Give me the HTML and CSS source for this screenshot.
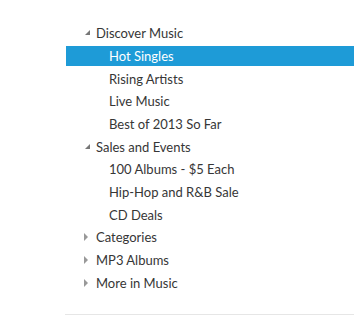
FILE: index.html
```html
<!DOCTYPE html>
<html>
<head>
<meta charset="utf-8">
<link rel="stylesheet" href="styles.css">
</head>
<body>
<div class="tree">
  <div class="row parent"><span class="tw"><svg width="6" height="6" viewBox="0 0 6 6"><polygon points="5,0 5,5 0,5" fill="#777"/></svg></span><span class="label">Discover Music</span></div>
  <div class="row child selected"><span class="label">Hot Singles</span></div>
  <div class="row child"><span class="label">Rising Artists</span></div>
  <div class="row child"><span class="label">Live Music</span></div>
  <div class="row child"><span class="label">Best of 2013 So Far</span></div>
  <div class="row parent"><span class="tw"><svg width="6" height="6" viewBox="0 0 6 6"><polygon points="5,0 5,5 0,5" fill="#777"/></svg></span><span class="label">Sales and Events</span></div>
  <div class="row child"><span class="label">100 Albums - $5 Each</span></div>
  <div class="row child"><span class="label">Hip-Hop and R&amp;B Sale</span></div>
  <div class="row child"><span class="label">CD Deals</span></div>
  <div class="row parent"><span class="tw closed"><svg width="5" height="8" viewBox="0 0 5 8"><polygon points="0,0 4,4 0,8" fill="#999"/></svg></span><span class="label">Categories</span></div>
  <div class="row parent"><span class="tw closed"><svg width="5" height="8" viewBox="0 0 5 8"><polygon points="0,0 4,4 0,8" fill="#999"/></svg></span><span class="label">MP3 Albums</span></div>
  <div class="row parent"><span class="tw closed"><svg width="5" height="8" viewBox="0 0 5 8"><polygon points="0,0 4,4 0,8" fill="#999"/></svg></span><span class="label">More in Music</span></div>
</div>
<div class="rule"></div>
</body>
</html>
```
FILE: styles.css
```css
html, body {
  margin: 0;
  padding: 0;
  background: #ffffff;
}
body {
  font-family: Lato, "Open Sans", sans-serif;
  font-size: 13px;
  color: #363636;
  width: 354px;
  height: 317px;
  overflow: hidden;
}
.tree {
  padding-top: 23.33px;
  margin-left: 66px;
  display: flex;
  flex-direction: column;
  gap: 2.67px;
}
.row {
  height: 20px;
  line-height: 20px;
  display: flex;
  align-items: center;
  white-space: nowrap;
}
.parent {
  padding-left: 16px;
}
.child {
  padding-left: 43px;
}
.tw {
  width: 14px;
  display: flex;
  align-items: center;
  padding-left: 3px;
  box-sizing: border-box;
}
.tw.closed {
  padding-left: 2px;
}
.selected {
  background: #1e9bd7;
  color: #ffffff;
}
.rule {
  margin-top: 21px;
  margin-left: 65px;
  height: 1px;
  background: #e6e6e6;
}
```
